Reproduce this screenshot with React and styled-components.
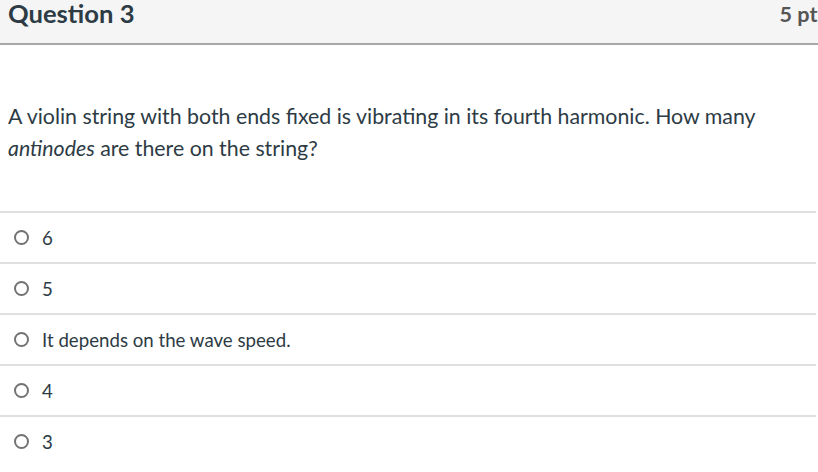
import React from "react";
import styled, { createGlobalStyle } from "styled-components";

const Global = createGlobalStyle`
  html, body { margin: 0; padding: 0; background: #fff; overflow: hidden; }
  body { font-family: Lato, "Noto Sans", sans-serif; color: #2d3b45; }
`;

const Page = styled.div`
  width: 835px;
`;

const Header = styled.div`
  display: flex;
  align-items: flex-start;
  justify-content: space-between;
  box-sizing: border-box;
  height: 45px;
  padding: 0 8px;
  background: #f5f5f5;
  border-bottom: 2px solid #a8a8a8;
`;

const Title = styled.h2`
  margin: -2px 0 0;
  font-size: 25.6px;
  line-height: 31px;
  font-weight: 700;
  color: #2d3b45;
`;

const Points = styled.div`
  margin-top: 1px;
  font-size: 21.6px;
  line-height: 26px;
  font-weight: 700;
  color: #555;
`;

const Body = styled.div`
  width: 816px;
`;

const QuestionText = styled.p`
  margin: 55px 0 0;
  padding: 0 8px;
  font-size: 21.33px;
  line-height: 32px;
  color: #2d3b45;
  em { font-style: italic; }
`;

const Answers = styled.div`
  margin-top: 47px;
`;

const Answer = styled.label`
  display: flex;
  align-items: center;
  gap: 13px;
  box-sizing: border-box;
  height: 51px;
  padding-left: 14px;
  border-top: 2px solid #e0e0e0;
  font-size: 18.67px;
  color: #2d3b45;
`;

const Radio = styled.span`
  box-sizing: border-box;
  width: 15px;
  height: 15px;
  border-radius: 50%;
  border: 2px solid #737373;
  flex: none;
`;

const options = ["6", "5", "It depends on the wave speed.", "4", "3"];

export default function App() {
  return (
    <Page>
      <Global />
      <Header>
        <Title>Question 3</Title>
        <Points>5 pts</Points>
      </Header>
      <Body>
        <QuestionText>
          A violin string with both ends fixed is vibrating in its fourth harmonic. How many{" "}
          <em>antinodes</em> are there on the string?
        </QuestionText>
        <Answers>
          {options.map((o) => (
            <Answer key={o}>
              <Radio />
              <span>{o}</span>
            </Answer>
          ))}
        </Answers>
      </Body>
    </Page>
  );
}
